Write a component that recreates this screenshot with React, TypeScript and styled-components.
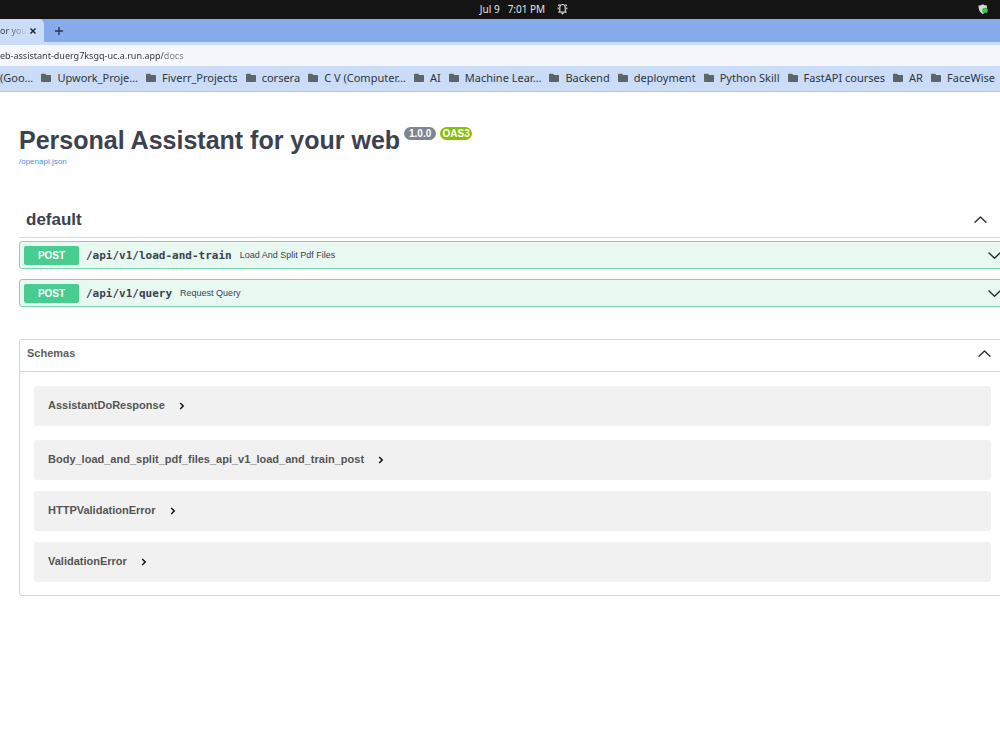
import React from "react";
import styled, { createGlobalStyle } from "styled-components";

const GlobalStyle = createGlobalStyle`
  * { box-sizing: border-box; }
  body {
    margin: 0;
    background: #ffffff;
    font-family: "Liberation Sans", Arial, sans-serif;
    color: #3b4151;
    overflow-x: hidden;
  }
  button {
    font: inherit;
    color: inherit;
    background: none;
    border: 0;
    padding: 0;
    cursor: pointer;
  }
  h1, h2, h3, p { margin: 0; }
  svg { display: block; flex: none; }
`;

const uiFont = `"Noto Sans", "Open Sans", sans-serif`;

const Page = styled.div`
  overflow: hidden;
`;

const SystemBar = styled.div`
  display: flex;
  align-items: center;
  height: 19px;
  padding: 0 12px 1px;
  background: #141414;
  color: #e6e6e6;
  font-family: ${uiFont};
  font-size: 10px;
  white-space: nowrap;
`;

const BarSide = styled.div`
  display: flex;
  flex: 1;
  justify-content: flex-end;
`;

const Clock = styled.button`
  display: flex;
  align-items: center;
  gap: 8px;
  padding-left: 48px;
`;

const BellWrap = styled.span`
  padding-left: 4px;
`;

const TabStrip = styled.div`
  display: flex;
  height: 23px;
  background: #85abea;
  font-family: ${uiFont};
`;

const Tab = styled.div`
  display: flex;
  align-items: center;
  justify-content: space-between;
  width: 44px;
  padding-right: 7px;
  border-radius: 0 5px 0 0;
  background: #cbdcf6;
`;

const TabTitle = styled.span`
  white-space: nowrap;
  font-size: 9px;
  color: #3c4149;
  mask-image: linear-gradient(to right, #000 30%, transparent 100%);
`;

const NewTab = styled.button`
  display: flex;
  align-items: center;
  padding: 0 10px;
`;

const AddressBar = styled.div`
  height: 24px;
  border-top: 3px solid #cbdcf6;
  background: #f6f7fd;
`;

const AddressInput = styled.input`
  display: block;
  width: 100%;
  height: 21px;
  padding: 0;
  border: 0;
  outline: 0;
  font-family: ${uiFont};
  font-size: 9px;
  color: #30343a;
  -webkit-text-fill-color: transparent;
  background: linear-gradient(to right, #30343a 163px, #777b82 163px);
  -webkit-background-clip: text;
  background-clip: text;
`;

const Bookmarks = styled.nav`
  display: flex;
  align-items: center;
  justify-content: space-between;
  height: 26px;
  padding: 0 5px 1px 0;
  border-bottom: 1px solid #b9c6dc;
  background: #cbdcf6;
`;

const Bookmark = styled.button`
  display: flex;
  align-items: center;
  gap: 6px;
  color: #2d3540;
  font-family: ${uiFont};
  font-size: 11px;
  line-height: 16px;
  white-space: nowrap;
`;

const Docs = styled.main`
  padding: 33px 0 0 19px;
`;

const TitleRow = styled.div`
  display: flex;
  align-items: flex-start;
  gap: 4px;
`;

const Title = styled.h1`
  font-size: 25px;
  line-height: 30px;
  font-weight: 700;
`;

const Pill = styled.span<{ $color: string }>`
  margin-top: 2px;
  padding: 0 2px;
  border-radius: 7px;
  min-width: 32px;
  text-align: center;
  background: ${(p) => p.$color};
  color: #ffffff;
  font-size: 10px;
  line-height: 13px;
  font-weight: 700;
`;

const SpecLink = styled.a`
  display: block;
  width: max-content;
  font-size: 8px;
  line-height: 14px;
  color: #4990e2;
  text-decoration: none;
`;

const SectionHeader = styled.button`
  display: flex;
  align-items: center;
  justify-content: space-between;
  width: 100%;
  height: 36px;
  margin-top: 33px;
  padding: 0 13px 0 7px;
  border-bottom: 1px solid #d8dade;
  text-align: left;
`;

const SectionTitle = styled.h2`
  font-size: 17px;
  line-height: 20px;
`;

const Operations = styled.div`
  display: flex;
  flex-direction: column;
  gap: 10px;
  margin: 3px -8px 0 0;
`;

const Operation = styled.button`
  display: flex;
  align-items: center;
  height: 28px;
  padding: 0 6px 0 4px;
  border: 1px solid #7fd6ae;
  border-radius: 3px;
  background: #e8f9f1;
  text-align: left;
`;

const Method = styled.span`
  width: 55px;
  border-radius: 2px;
  background: #49cc90;
  color: #ffffff;
  font-size: 10px;
  line-height: 19px;
  font-weight: 700;
  text-align: center;
`;

const Path = styled.span`
  padding: 0 8px 0 7px;
  font-family: "DejaVu Sans Mono", monospace;
  font-size: 11px;
  font-weight: 700;
`;

const Summary = styled.span`
  flex: 1;
  font-size: 9px;
`;

const Models = styled.section`
  margin: 32px -8px 0 0;
  border: 1px solid #d3d5d8;
  border-radius: 3px;
`;

const ModelsHeader = styled.button`
  display: flex;
  align-items: center;
  justify-content: space-between;
  width: 100%;
  height: 32px;
  padding: 0 16px 4px 7px;
  border-bottom: 1px solid #d3d5d8;
  color: #606060;
`;

const ModelsTitle = styled.h3`
  padding-bottom: 2px;
  font-size: 11px;
  line-height: 14px;
`;

const ModelList = styled.div`
  display: flex;
  flex-direction: column;
  gap: 11px;
  padding: 14px 16px 13px 14px;
`;

const Model = styled.button`
  display: flex;
  align-items: center;
  gap: 13px;
  height: 40px;
  padding: 0 14px 2px;
  border-radius: 3px;
  background: #f1f1f1;
  color: #555555;
  font-size: 11px;
  font-weight: 700;

  &:first-child { margin-bottom: 3px; }
`;

const Folder = () => (
  <svg width="10" height="10" viewBox="0 0 10 10" aria-hidden="true">
    <path d="M.8.8h3.400l1 1.200H9.200q.8 0 .8.800v5.400q0 .8-.8.800H.8Q0 9 0 8.200V1.600Q0 .8.8.8z" fill="#5f6466" />
  </svg>
);

const Chevron = ({ up = false }: { up?: boolean }) => (
  <svg width="13" height="13" viewBox="0 0 13 13" fill="none" stroke="#2b2e34" strokeWidth="1.4" strokeLinecap="round" strokeLinejoin="round" aria-hidden="true">
    <path d={up ? "M1 9.3 6.5 3.9 12 9.3" : "M1 3.9 6.5 9.3 12 3.9"} />
  </svg>
);

const SmallChevron = () => (
  <svg width="8" height="12" viewBox="0 0 8 12" fill="none" stroke="#111111" strokeWidth="1.5" aria-hidden="true">
    <path d="M2.2 4 5.2 7 2.2 10" />
  </svg>
);

const Bell = () => (
  <svg width="11" height="12" viewBox="0 0 11 12" fill="none" stroke="#d4d4d4" strokeWidth="1.2" aria-hidden="true">
    <path d="M2.8 8.700V4.400Q2.800 1.500 5.500 1.500T8.200 4.400V8.700M1.300 9.200h8.400M1.300 2.800l1.200-1.400M9.700 2.800 8.500 1.400M1.200 4.500v1.700M9.800 4.500v1.700" />
    <path d="M4 10h3L5.500 11.700z" fill="#dddddd" stroke="none" />
  </svg>
);

const Shield = () => (
  <svg width="10" height="11" viewBox="0 0 10 11" aria-hidden="true">
    <path d="M.5 1.600Q3 1.500 4.700.3 6.500 1.500 9 1.600 9.400 7.500 4.700 10.300.200 7.500.500 1.600z" fill="#d5d8d5" />
    <circle cx="7" cy="6.500" r="2.800" fill="#39b54a" />
    <path d="M5.700 6.500 6.700 7.500 8.400 5.600" fill="none" stroke="#7ddb88" strokeWidth=".7" />
  </svg>
);

const folders = [
  "Upwork_Proje…",
  "Fiverr_Projects",
  "corsera",
  "C V (Computer…",
  "AI",
  "Machine Lear…",
  "Backend",
  "deployment",
  "Python Skill",
  "FastAPI courses",
  "AR",
  "FaceWise",
];

const operations = [
  { path: "/api/v1/load-and-train", summary: "Load And Split Pdf Files" },
  { path: "/api/v1/query", summary: "Request Query" },
];

const models = [
  "AssistantDoResponse",
  "Body_load_and_split_pdf_files_api_v1_load_and_train_post",
  "HTTPValidationError",
  "ValidationError",
];

export default function App() {
  return (
    <Page>
      <GlobalStyle />
      <SystemBar>
        <BarSide />
        <Clock>
          <span>Jul 9</span>
          <span>7:01 PM</span>
          <BellWrap><Bell /></BellWrap>
        </Clock>
        <BarSide><Shield /></BarSide>
      </SystemBar>

      <TabStrip>
        <Tab>
          <TabTitle>or you</TabTitle>
          <button aria-label="Close tab">
            <svg width="8" height="8" viewBox="0 0 8 8" stroke="#25292f" strokeWidth="1.5" aria-hidden="true">
              <path d="M1.500 1.500l5 5M6.500 1.500l-5 5" />
            </svg>
          </button>
        </Tab>
        <NewTab aria-label="New tab">
          <svg width="10" height="10" viewBox="0 0 10 10" stroke="#2b3442" strokeWidth="1.3" aria-hidden="true">
            <path d="M5 1v8M1 5h8" />
          </svg>
        </NewTab>
      </TabStrip>

      <AddressBar>
        <AddressInput aria-label="Address" defaultValue="eb-assistant-duerg7ksgq-uc.a.run.app/docs" />
      </AddressBar>

      <Bookmarks aria-label="Bookmarks">
        <Bookmark>(Goo…</Bookmark>
        {folders.map((name) => (
          <Bookmark key={name}>
            <Folder />
            {name}
          </Bookmark>
        ))}
      </Bookmarks>

      <Docs>
        <TitleRow>
          <Title>Personal Assistant for your web</Title>
          <Pill $color="#7d8492">1.0.0</Pill>
          <Pill $color="#89bf04">OAS3</Pill>
        </TitleRow>
        <SpecLink href="/openapi.json">/openapi.json</SpecLink>

        <SectionHeader>
          <SectionTitle>default</SectionTitle>
          <Chevron up />
        </SectionHeader>
        <Operations>
          {operations.map((op) => (
            <Operation key={op.path}>
              <Method>POST</Method>
              <Path>{op.path}</Path>
              <Summary>{op.summary}</Summary>
              <Chevron />
            </Operation>
          ))}
        </Operations>

        <Models>
          <ModelsHeader>
            <ModelsTitle>Schemas</ModelsTitle>
            <Chevron up />
          </ModelsHeader>
          <ModelList>
            {models.map((name) => (
              <Model key={name}>
                {name}
                <SmallChevron />
              </Model>
            ))}
          </ModelList>
        </Models>
      </Docs>
    </Page>
  );
}
